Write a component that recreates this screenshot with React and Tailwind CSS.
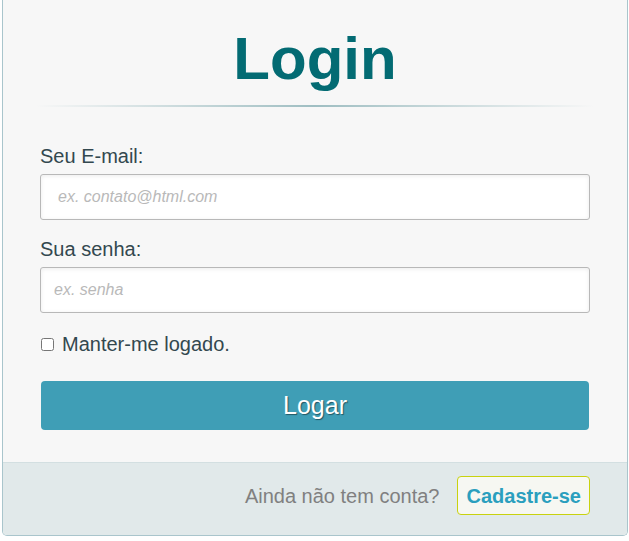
export default function App() {
  return (
    <div className="min-h-screen bg-white font-['Liberation_Sans',Arial,sans-serif]">
      <div className="ml-[2px] w-[626px] bg-[#f7f7f7] border-x border-b border-[#a9c5cc] rounded-b-[5px] overflow-hidden">
        {/* Header */}
        <div className="pt-[24px] px-[33px]">
          <h1 className="text-center text-[60px] leading-[69px] font-bold text-[#036b73]">Login</h1>
          <div className="mt-[12px] h-[2px] bg-gradient-to-r from-transparent via-[#9fbec2] to-transparent" />
        </div>

        {/* Form */}
        <form className="px-[37px] pt-[38px]" onSubmit={e => e.preventDefault()}>
          <label className="block text-[20px] leading-[23px] text-[#33484f]">Seu E-mail:</label>
          <input
            type="email"
            placeholder="ex. contato@html.com"
            className="mt-[6px] block w-full h-[46px] bg-white border border-[#b8b8b8] rounded-[3px] pl-[17px] text-[16px] placeholder:italic placeholder:text-[#b9b9b9] shadow-[inset_0_1px_4px_rgba(0,0,0,0.08)] outline-none"
          />

          <label className="mt-[18px] block text-[20px] leading-[23px] text-[#33484f]">Sua senha:</label>
          <input
            type="password"
            placeholder="ex. senha"
            className="mt-[6px] block w-full h-[46px] bg-white border border-[#b8b8b8] rounded-[3px] pl-[13px] text-[16px] placeholder:italic placeholder:text-[#b9b9b9] shadow-[inset_0_1px_4px_rgba(0,0,0,0.08)] outline-none"
          />

          <label className="mt-[20px] flex items-center gap-[8px] text-[20px] leading-[23px] text-[#33484f]">
            <input type="checkbox" className="ml-[1px] w-[13px] h-[13px] m-0" />
            Manter-me logado.
          </label>

          <button
            type="submit"
            className="mt-[25px] ml-[1px] w-[548px] h-[49px] bg-[#3f9eb6] rounded-[4px] text-white text-[25px] [text-shadow:1px_1px_1px_rgba(0,0,0,0.45)]"
          >
            Logar
          </button>
        </form>

        {/* Footer */}
        <div className="mt-[32px] bg-[#e1e9ea] border-t border-[#d3dfe1] pt-[13px] pb-[20px] pr-[37px] flex items-center justify-end gap-[18px]">
          <span className="text-[20px] text-[#808080]">Ainda não tem conta?</span>
          <a
            href="#"
            className="h-[39px] px-[8px] flex items-center bg-[#f6f7f2] border border-[#c8d20f] rounded-[4px] text-[20px] font-bold text-[#2a9fbe]"
          >
            Cadastre-se
          </a>
        </div>
      </div>
    </div>
  )
}
